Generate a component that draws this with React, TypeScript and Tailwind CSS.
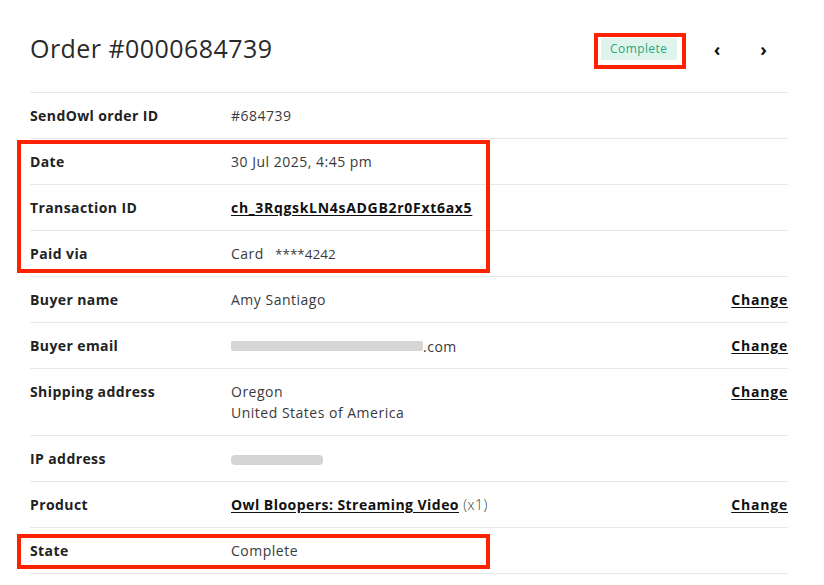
import React from "react";

const font = { fontFamily: '"Open Sans", "Noto Sans", sans-serif' };

function Row({
  label,
  children,
  change,
  tall,
}: {
  label: string;
  children: React.ReactNode;
  change?: boolean;
  tall?: boolean;
}) {
  return (
    <div
      className={`flex border-t border-[#e8e8ea] py-[12px] text-[14px] leading-[21px] box-border overflow-hidden ${
        tall ? "h-[67px]" : "h-[46px]"
      }`}
    >
      <div className="w-[201px] shrink-0 font-bold text-[#222] tracking-[0.4px]">{label}</div>
      <div className="flex-1 text-[#3a3a3a] tracking-[0.5px]">{children}</div>
      {change && (
        <a className="font-bold text-[#111] underline underline-offset-2 tracking-[0.8px]">Change</a>
      )}
    </div>
  );
}

export default function App() {
  return (
    <div className="relative w-[824px] h-[585px] bg-white overflow-hidden" style={font}>
      <div className="ml-[30px] mr-[36px]">
        <div className="flex items-center h-[52px] mt-[23px] mb-[17px]">
          <h1 className="text-[25px] font-normal text-[#2a2a2a] tracking-[0.45px]">Order #0000684739</h1>
          <div className="flex-1" />
          <span className="bg-[#def4ec] text-[#2ba97f] text-[12px] leading-[22px] w-[76px] text-center h-[22px] tracking-[0.4px]">
            Complete
          </span>
          <div className="flex items-center ml-[37px] gap-[40px] mr-[21px] text-[#111] font-bold text-[18px]">
            <span>‹</span>
            <span>›</span>
          </div>
        </div>
        <Row label="SendOwl order ID">#684739</Row>
        <Row label="Date">30 Jul 2025, 4:45 pm</Row>
        <Row label="Transaction ID">
          <a className="font-bold text-[#111] underline underline-offset-2 tracking-[0.7px]">ch_3RqgskLN4sADGB2r0Fxt6ax5</a>
        </Row>
        <Row label="Paid via">
          Card <span className="ml-[7px] tracking-[0px] text-[13.5px]">****4242</span>
        </Row>
        <Row label="Buyer name" change>Amy Santiago</Row>
        <Row label="Buyer email" change>
          <span className="inline-flex items-center">
            <span className="inline-block w-[192px] h-[10px] bg-[#d6d6d6] rounded-[2px]" />
            <span>.com</span>
          </span>
        </Row>
        <Row label="Shipping address" change tall>
          <div>Oregon</div>
          <div>United States of America</div>
        </Row>
        <Row label="IP address">
          <span className="inline-block w-[92px] h-[10px] bg-[#d4d4d4] rounded-[4px] align-middle" />
        </Row>
        <Row label="Product" change>
          <a className="font-bold text-[#111] underline underline-offset-2 tracking-[0.45px]">Owl Bloopers: Streaming Video</a>
          <span className="font-light"> (x1)</span>
        </Row>
        <Row label="State">Complete</Row>
        <div className="border-t border-[#e8e8ea]" />
      </div>

      <div className="absolute left-[594px] top-[33px] w-[92px] h-[36px] border-[4px] border-[#ff2200]" />
      <div className="absolute left-[17px] top-[140px] w-[473px] h-[133px] border-[4px] border-[#ff2200]" />
      <div className="absolute left-[17px] top-[534px] w-[473px] h-[35px] border-[4px] border-[#ff2200]" />
    </div>
  );
}
